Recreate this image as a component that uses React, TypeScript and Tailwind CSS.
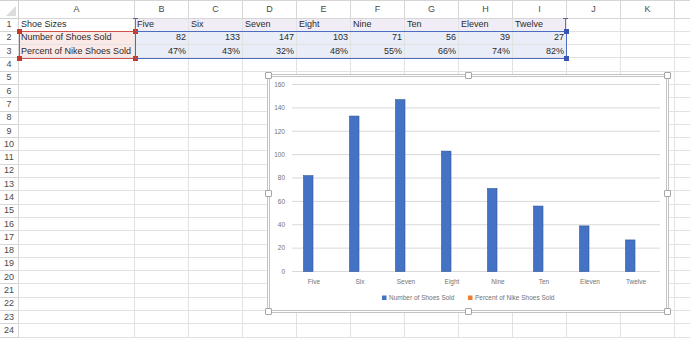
const cols = ['A', 'B', 'C', 'D', 'E', 'F', 'G', 'H', 'I', 'J', 'K']
const sizes = ['Five', 'Six', 'Seven', 'Eight', 'Nine', 'Ten', 'Eleven', 'Twelve']
const sold = [82, 133, 147, 103, 71, 56, 39, 27]
const pct = [47, 43, 32, 48, 55, 66, 74, 82]

function cellText(r: number, c: number): { text: string; right?: boolean } {
  if (c === 0) {
    if (r === 1) return { text: 'Shoe Sizes' }
    if (r === 2) return { text: 'Number of Shoes Sold' }
    if (r === 3) return { text: 'Percent of Nike Shoes Sold' }
    return { text: '' }
  }
  if (c >= 1 && c <= 8) {
    if (r === 1) return { text: sizes[c - 1] }
    if (r === 2) return { text: String(sold[c - 1]), right: true }
    if (r === 3) return { text: pct[c - 1] + '%', right: true }
  }
  return { text: '' }
}

function cellFill(r: number, c: number) {
  if (c === 0 && (r === 2 || r === 3)) return 'bg-[#fbe9e8]'
  if (c >= 1 && c <= 8 && r === 1) return 'bg-[#f1edf6]'
  if (c >= 1 && c <= 8 && (r === 2 || r === 3)) return 'bg-[#e8edf8]'
  return 'bg-white'
}

function Handle({ className }: { className: string }) {
  return <div className={'absolute w-[7px] h-[7px] bg-white border border-[#a6a6a6] rounded-[1px] ' + className} />
}

function Dot({ className }: { className: string }) {
  return <div className={'absolute w-[5px] h-[5px] ' + className} />
}

function Chart() {
  const y0 = 197.5
  const k = 187 / 160
  const ticks = [0, 20, 40, 60, 80, 100, 120, 140, 160]
  return (
    <div className="absolute left-[267px] top-[74px] w-[402px] h-[239px] bg-white">
      <div className="absolute inset-0 border-[3px] border-double border-[#c4c4c4]" />
      <svg className="absolute inset-0" width="402" height="239" viewBox="0 0 402 239">
        {ticks.map((t) => (
          <g key={t}>
            <line x1="25" x2="393" y1={y0 - t * k} y2={y0 - t * k} stroke="#d9d9d9" strokeWidth="1" />
            <text
              x="18"
              y={y0 - t * k + 2.3}
              textAnchor="end"
              fontSize="6.5"
              fill="#737373"
              fontFamily="'Liberation Sans', sans-serif"
            >
              {t}
            </text>
          </g>
        ))}
        {sold.map((v, i) => {
          const c = 47 + 46 * i
          return (
            <g key={i}>
              <rect
                x={c - 10.5}
                y={y0 - v * k}
                width="9.5"
                height={v * k}
                fill="#4472c4"
                stroke="#2f5597"
                strokeWidth="0.6"
              />
              <text
                x={c}
                y="210"
                textAnchor="middle"
                fontSize="6.5"
                fill="#737373"
                fontFamily="'Liberation Sans', sans-serif"
              >
                {sizes[i]}
              </text>
            </g>
          )
        })}
        <rect x="115" y="221.5" width="4.5" height="4.5" fill="#4472c4" />
        <text x="122" y="226" fontSize="6.5" fill="#737373" fontFamily="'Liberation Sans', sans-serif">
          Number of Shoes Sold
        </text>
        <rect x="201" y="221.5" width="4.5" height="4.5" fill="#ed7d31" />
        <text x="208" y="226" fontSize="6.5" fill="#737373" fontFamily="'Liberation Sans', sans-serif">
          Percent of Nike Shoes Sold
        </text>
      </svg>
      <Handle className="-left-[2px] -top-[2px]" />
      <Handle className="left-[198px] -top-[2px]" />
      <Handle className="-right-[2px] -top-[2px]" />
      <Handle className="-left-[2px] top-[116px]" />
      <Handle className="-right-[2px] top-[116px]" />
      <Handle className="-left-[2px] -bottom-[2px]" />
      <Handle className="left-[198px] -bottom-[2px]" />
      <Handle className="-right-[2px] -bottom-[2px]" />
    </div>
  )
}

export default function App() {
  const rows = Array.from({ length: 24 }, (_, i) => i + 1)
  return (
    <div className="relative w-[690px] h-[338px] overflow-hidden bg-white font-['Liberation_Sans',sans-serif] text-[9px] text-[#2b2b2b]">
      <div className="grid grid-cols-[19px_116px_repeat(10,54px)_1fr] grid-rows-[18.5px_repeat(24,13.3px)]">
        <div className="relative border-r border-b border-t border-[#cfcfcf] bg-white">
          <svg className="absolute right-[2px] bottom-[2px]" width="10" height="10" viewBox="0 0 10 10">
            <path d="M10 0 L10 10 L0 10 Z" fill="#dcdcdc" />
          </svg>
        </div>
        {cols.map((c) => (
          <div
            key={c}
            className="flex items-center justify-center border-r border-b border-t border-[#d6d6d6] bg-white text-[#4a4a4a]"
          >
            {c}
          </div>
        ))}
        <div className="border-b border-t border-[#d6d6d6] bg-white" />
        {rows.map((r) => (
          <div key={r} className="contents">
            <div className="flex items-center justify-center border-r border-b border-[#d6d6d6] text-[#4a4a4a] leading-none">
              {r}
            </div>
            {cols.map((_, c) => {
              const t = cellText(r, c)
              return (
                <div
                  key={c}
                  className={
                    'flex items-center px-[2px] overflow-visible whitespace-nowrap leading-none border-r border-b border-[#e2e2e2] ' +
                    cellFill(r, c) +
                    (t.right ? ' justify-end' : '')
                  }
                >
                  {t.text}
                </div>
              )
            })}
            <div className="border-b border-[#e2e2e2]" />
          </div>
        ))}
      </div>

      {/* series name range A2:A3 */}
      <div className="absolute left-[19px] top-[31px] w-[117px] h-[28px] border border-[#d0504c]">
        <Dot className="-left-[3px] -top-[3px] bg-[#c0392b]" />
        <Dot className="-right-[3px] -top-[3px] bg-[#c0392b]" />
        <Dot className="-left-[3px] -bottom-[3px] bg-[#c0392b]" />
        <Dot className="-right-[3px] -bottom-[3px] bg-[#c0392b]" />
      </div>

      {/* category range B1:I1 */}
      <div className="absolute left-[135px] top-[19px] w-[431px] h-[13px] border-b border-r border-l border-[#8668ab]">
        <div className="absolute -left-[3px] -top-px w-[5px] h-px bg-[#6a5aa8]" />
        <div className="absolute -right-[3px] -top-px w-[5px] h-px bg-[#6a5aa8]" />
      </div>

      {/* values range B2:I3 */}
      <div className="absolute left-[135px] top-[31px] w-[432px] h-[28px] border border-[#4c6cc0]">
        <Dot className="-right-[3px] -top-[3px] bg-[#3a55b0]" />
        <Dot className="-right-[3px] -bottom-[3px] bg-[#3a55b0]" />
      </div>

      <Chart />
    </div>
  )
}
